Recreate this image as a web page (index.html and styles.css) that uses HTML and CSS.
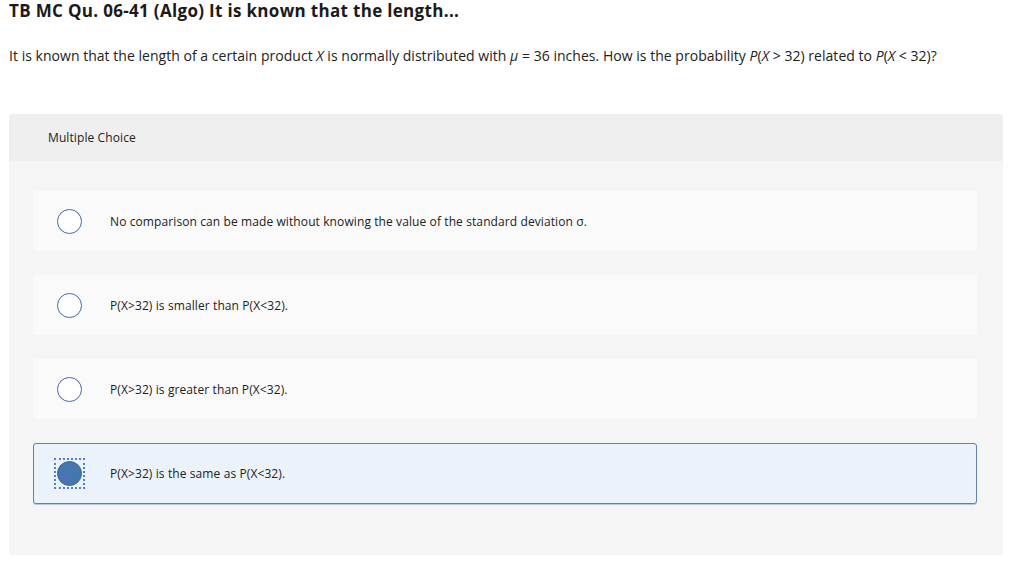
FILE: index.html
```html
<!DOCTYPE html>
<html>
<head>
<meta charset="utf-8">
<link rel="stylesheet" href="styles.css">
</head>
<body>
<h1 class="title">TB MC Qu. 06-41 (Algo) It is known that the length...</h1>
<p class="question">It is known that the length of a certain product <i class="m">X</i> is normally distributed with <i class="m">μ</i> = 36 inches. How is the probability <i class="m">P</i>(<i class="m">X</i> &gt; 32) related to <i class="m">P</i>(<i class="m">X</i> &lt; 32)?</p>
<section class="panel">
  <div class="panel-head">Multiple Choice</div>
  <div class="options">
    <div class="option"><span class="radio"></span><span class="label">No comparison can be made without knowing the value of the standard deviation σ.</span></div>
    <div class="option"><span class="radio"></span><span class="label">P(X&gt;32) is smaller than P(X&lt;32).</span></div>
    <div class="option"><span class="radio"></span><span class="label">P(X&gt;32) is greater than P(X&lt;32).</span></div>
    <div class="option selected"><span class="focus"><span class="radio"></span></span><span class="label">P(X&gt;32) is the same as P(X&lt;32).</span></div>
  </div>
</section>
</body>
</html>
```
FILE: styles.css
```css
html, body { margin: 0; padding: 0; background: #fff; }
body {
  font-family: "Open Sans", "Liberation Sans", sans-serif;
  color: #222;
  padding: 0 9px;
}
.title {
  margin: 0;
  padding-top: 1px;
  font-size: 17px;
  line-height: 20px;
  font-weight: 700;
  letter-spacing: 0.32px;
  color: #1a1a1a;
}
.question {
  margin: 25px 0 0;
  font-size: 14px;
  line-height: 20px;
  letter-spacing: 0.03px;
  color: #222;
}
.question .m { font-style: italic; }
.panel {
  margin-top: 48px;
  width: 994px;
  background: #f5f5f5;
  border-radius: 3px;
  overflow: hidden;
}
.panel-head {
  height: 47px;
  background: #efefef;
  padding-left: 39px;
  display: flex;
  align-items: center;
  font-size: 12px;
  letter-spacing: 0.1px;
  color: #222;
}
.options {
  padding: 30px 26px 51px 24px;
  display: flex;
  flex-direction: column;
  gap: 24px;
}
.option {
  height: 60px;
  background: #fafafa;
  border-radius: 3px;
  display: flex;
  align-items: center;
  padding-left: 24px;
}
.option.selected {
  height: 59px;
  background: #ebf2fa;
  border: 1px solid #5b82b8;
  padding-left: 23px;
  box-shadow: 0 1px 0 #b8c9de;
}
.radio {
  width: 25px;
  height: 25px;
  border: 1.3px solid #3f6ca8;
  border-radius: 50%;
  background: #fff;
  box-sizing: border-box;
  flex: none;
}
.focus {
  width: 31px;
  height: 31px;
  margin-left: -3px;
  margin-right: -3px;
  box-sizing: border-box;
  border: 2px dotted #4f7fd0;
  display: flex;
  align-items: center;
  justify-content: center;
  flex: none;
}
.selected .radio {
  width: 25px;
  height: 25px;
  background: #4676b2;
  border-color: #3a659c;
}
.label {
  margin-left: 28px;
  font-size: 12px;
  letter-spacing: 0.1px;
  color: #222;
}
```
